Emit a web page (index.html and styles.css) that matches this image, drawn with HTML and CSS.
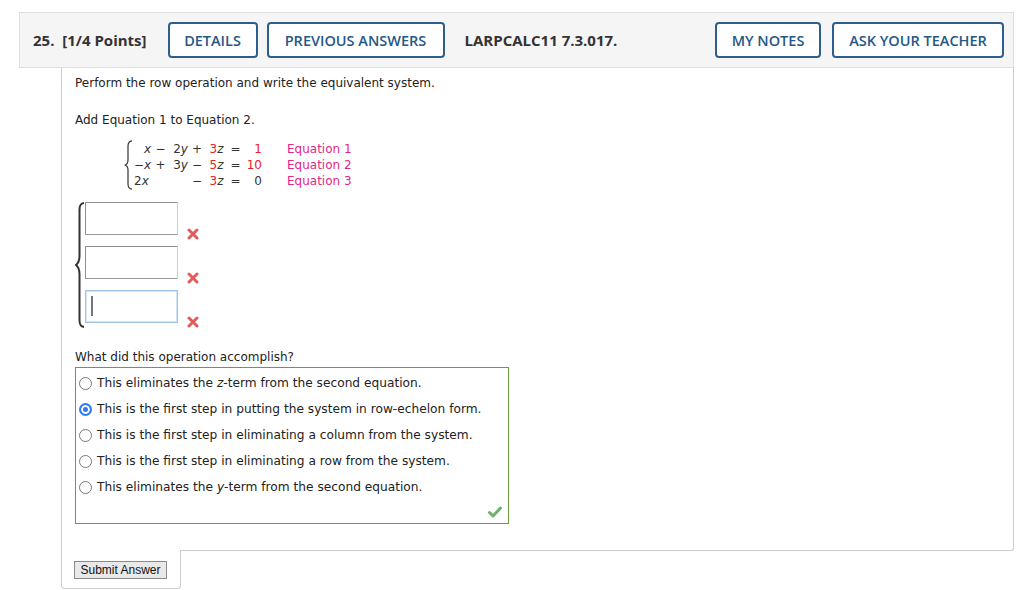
FILE: index.html
```html
<!DOCTYPE html>
<html>
<head>
<meta charset="utf-8">
<link rel="stylesheet" href="styles.css">
</head>
<body>
<div class="page">
  <div class="qhead">
    <span class="qtitle">25.&nbsp; [1/4 Points]</span>
    <button class="hbtn hbtn-details">DETAILS</button>
    <button class="hbtn hbtn-prev">PREVIOUS ANSWERS</button>
    <span class="qcode">LARPCALC11 7.3.017.</span>
    <span class="spacer"></span>
    <button class="hbtn hbtn-notes">MY NOTES</button>
    <button class="hbtn hbtn-ask">ASK YOUR TEACHER</button>
  </div>
  <div class="qbody">
    <p class="line first">Perform the row operation and write the equivalent system.</p>
    <p class="line add">Add Equation 1 to Equation 2.</p>
    <div class="system">
      <svg class="sbrace" width="9" height="50" viewBox="0 0 9 50"><path d="M8 0.8 C4.5 1.2 4 3 4 6 L4 20 C4 23 3 24.5 0.8 25 C3 25.5 4 27 4 30 L4 44 C4 47 4.5 48.8 8 49.2" fill="none" stroke="#333" stroke-width="1.2"/></svg>
      <div class="eqgrid">
        <span class="c1"><i>x</i></span><span class="op">−</span><span class="t">2<i>y</i></span><span class="op2">+</span><span class="t3"><b class="red">3</b><i>z</i></span><span class="eq">=</span><span class="rhs red">1</span><span class="lab">Equation 1</span>
        <span class="c1">−<i>x</i></span><span class="op">+</span><span class="t">3<i>y</i></span><span class="op2">−</span><span class="t3"><b class="red">5</b><i>z</i></span><span class="eq">=</span><span class="rhs red">10</span><span class="lab">Equation 2</span>
        <span class="c1 left">2<i>x</i></span><span class="op"></span><span class="t"></span><span class="op2">−</span><span class="t3"><b class="red">3</b><i>z</i></span><span class="eq">=</span><span class="rhs">0</span><span class="lab">Equation 3</span>
      </div>
    </div>
    <div class="answers">
      <svg class="bigbrace" width="10" height="126" viewBox="0 0 10 126"><path d="M9 1 C5 1.5 4.5 4 4.5 8 L4.5 54 C4.5 58 3.5 61 1 63 C3.5 65 4.5 68 4.5 72 L4.5 118 C4.5 122 5 124.5 9 125" fill="none" stroke="#333" stroke-width="2"/></svg>
      <div class="inrows">
        <div class="inrow"><input class="box" type="text"><svg class="xmark" width="12" height="12" viewBox="0 0 12 12"><path d="M2 2 L10 10 M10 2 L2 10" stroke="#e35b5b" stroke-width="3" stroke-linecap="round"/></svg></div>
        <div class="inrow"><input class="box" type="text"><svg class="xmark" width="12" height="12" viewBox="0 0 12 12"><path d="M2 2 L10 10 M10 2 L2 10" stroke="#e35b5b" stroke-width="3" stroke-linecap="round"/></svg></div>
        <div class="inrow"><span class="boxwrap"><input class="box focused" type="text"><span class="caret"></span></span><svg class="xmark" width="12" height="12" viewBox="0 0 12 12"><path d="M2 2 L10 10 M10 2 L2 10" stroke="#e35b5b" stroke-width="3" stroke-linecap="round"/></svg></div>
      </div>
    </div>
    <p class="line ask">What did this operation accomplish?</p>
    <div class="choices">
      <label class="choice"><span class="radio"></span><span>This eliminates the <i>z</i>-term from the second equation.</span></label>
      <label class="choice"><span class="radio on"></span><span>This is the first step in putting the system in row-echelon form.</span></label>
      <label class="choice"><span class="radio"></span><span>This is the first step in eliminating a column from the system.</span></label>
      <label class="choice"><span class="radio"></span><span>This is the first step in eliminating a row from the system.</span></label>
      <label class="choice"><span class="radio"></span><span>This eliminates the <i>y</i>-term from the second equation.</span></label>
      <svg class="check" width="14" height="12" viewBox="0 0 14 12"><path d="M1.5 6.5 L5 10 L12.5 2" fill="none" stroke="#6cb36a" stroke-width="3" stroke-linecap="round" stroke-linejoin="round"/></svg>
    </div>
  </div>
  <div class="submitTab">
    <button class="submit">Submit Answer</button>
  </div>
</div>
</body>
</html>
```
FILE: styles.css
```css
html, body { margin: 0; padding: 0; background: #fff; }
body { font-family: "DejaVu Sans", Verdana, sans-serif; color: #222; }
.page { padding: 12px 10px 0 19px; }

.qhead {
  display: flex;
  align-items: center;
  height: 54px;
  background: #f5f5f5;
  border: 1px solid #dddddd;
  padding: 0 9px 0 13px;
  font-family: "Open Sans", sans-serif;
}
.qtitle { font-weight: 700; font-size: 15px; color: #333; margin-right: 21px; }
.qcode { font-weight: 700; font-size: 15px; color: #333; margin-left: 20px; }
.spacer { flex: 1; }
.hbtn {
  font-family: "Open Sans", sans-serif;
  font-weight: 600;
  font-size: 14.5px;
  color: #245887;
  background: #fff;
  border: 2px solid #2d5f8e;
  border-radius: 4px;
  height: 36px;
  padding: 0 10px;
  margin: 0;
}
.hbtn-details { width: 90px; }
.hbtn-prev { width: 178px; margin-left: 9px; }
.hbtn-notes { width: 106px; }
.hbtn-ask { width: 172px; margin-left: 11px; }

.qbody {
  margin-left: 42px;
  height: 482px;
  border: 1px solid #cccccc;
  border-top: none;
  border-bottom-right-radius: 3px;
  padding: 0 13px;
  font-size: 12px;
}
.line { margin: 0; line-height: 16px; }
.first { padding-top: 7px; }
.add { margin-top: 21px; }

.system { display: flex; align-items: flex-start; margin-top: 12px; margin-left: 49px; }
.sbrace { margin-top: 0; margin-right: 1px; }
.eqgrid {
  display: grid;
  grid-template-columns: 17px 19px 21px 12px 27px 11px 21px auto;
  line-height: 16px;
  font-size: 12px;
  color: #333;
  margin-top: 1px;
}
.eqgrid i { font-style: italic; }
.eqgrid b { font-weight: normal; }
.c1 { text-align: right; }
.c1.left { text-align: left; white-space: nowrap; }
.op, .op2, .t, .t3, .eq { text-align: center; }
.rhs { text-align: right; }
.red { color: #e8201f; }
.lab { color: #e0288a; padding-left: 25px; white-space: nowrap; }

.answers { display: flex; margin-top: 12px; }
.bigbrace { margin-top: 0; margin-left: 0; }
.inrows { display: flex; flex-direction: column; gap: 11px; margin-left: 0; }
.inrow { display: flex; align-items: flex-end; }
.box {
  box-sizing: border-box;
  width: 93px;
  height: 33px;
  margin: 0;
  padding: 0;
  border: 1px solid #8f8f8f;
  border-right-color: #cfcfcf;
  border-bottom-color: #9a9a9a;
  background: #fff;
  outline: none;
}
.box.focused { border: 1px solid #a4c3e6; box-shadow: 0 0 0 1px #d3e3f5 inset; }
.boxwrap { position: relative; display: block; }
.caret { position: absolute; left: 6px; top: 6px; width: 2px; height: 20px; background: #777; }
.xmark { margin-left: 9px; margin-bottom: -5px; }

.ask { margin-top: 21px; color: #222; }
.choices {
  position: relative;
  width: 432px;
  height: 153px;
  border: 1px solid #6b9e3a;
  margin-top: 2px;
  padding-top: 2px;
  box-sizing: content-box;
  font-size: 12.2px;
}
.choice { display: flex; align-items: center; height: 26px; padding-left: 3px; color: #222; }
.choice i { font-style: italic; }
.radio {
  box-sizing: border-box;
  width: 13px; height: 13px;
  border: 1px solid #7a7a7a;
  border-radius: 50%;
  background: #fff;
  margin-right: 5px;
  flex: none;
}
.radio.on { border: 2px solid #2f7cf6; box-shadow: inset 0 0 0 2px #fff; background: #2f7cf6; }
.check { position: absolute; right: 6px; bottom: 5px; }

.submitTab {
  margin-left: 42px;
  margin-top: -1px;
  width: 118px;
  height: 38px;
  border: 1px solid #cccccc;
  border-top: none;
  border-radius: 0 0 4px 4px;
  background: #fff;
  position: relative;
}
.submit {
  position: absolute;
  left: 12px;
  top: 11px;
  font-family: "Liberation Sans", Arial, sans-serif;
  font-size: 12px;
  height: 18px;
  width: 93px;
  padding: 0;
  background: #e9e9e9;
  border: 1px solid #8a8a8a;
  border-radius: 0;
  color: #111;
  line-height: 16px;
}
```
